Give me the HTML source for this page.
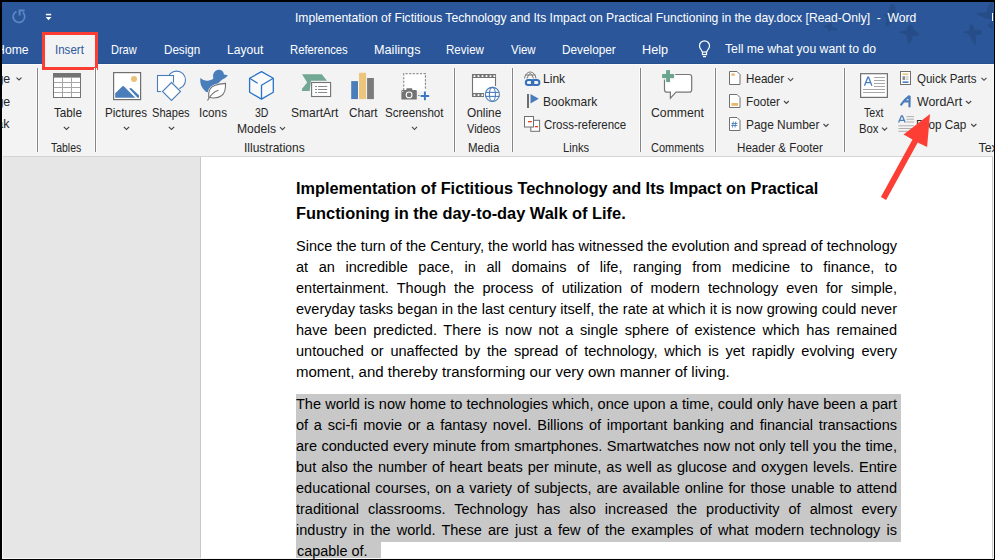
<!DOCTYPE html>
<html><head><meta charset="utf-8">
<style>
*{margin:0;padding:0;box-sizing:border-box}
html,body{width:995px;height:560px;overflow:hidden;background:#000}
body{position:relative;font-family:"Liberation Sans",sans-serif}
#blue{position:absolute;left:2px;top:2px;width:992px;height:62px;background:#2b579a;overflow:hidden}
#ribbon{position:absolute;left:2px;top:64px;width:992px;height:92px;background:#f3f3f3}
#rbline{position:absolute;left:2px;top:156px;width:992px;height:1px;background:#d4d4d4}
#doc{position:absolute;left:2px;top:157px;width:992px;height:402px;background:#e6e6e6}
#page{position:absolute;left:200px;top:157px;width:793px;height:402px;background:#fff;border-left:1px solid #c9c9c9;border-right:1px solid #c9c9c9}
#insbox{position:absolute;left:42px;top:32px;width:56px;height:38px;border:3px solid #fc3d33;background:#f3f3f3}
.sep{position:absolute;top:68px;width:1px;height:84px;background:#858585;box-shadow:-1px 0 0 #fcfcfc,1px 0 0 #fcfcfc}
.tx{position:absolute;white-space:pre;line-height:1;transform-origin:0 0}
.dl{position:absolute;left:295.6px;width:570.75px;font-size:13.8px;line-height:1;color:#000;white-space:nowrap;transform:scaleX(1.053);transform-origin:0 0}
.dl.j{white-space:normal;text-align:justify;text-align-last:justify}
.hl{position:absolute;background:#c8c8c8}
.chev{position:absolute;width:6px;height:4px}
svg{position:absolute;overflow:visible}
</style></head><body>
<div id="blue"></div>
<svg width="995" height="560" viewBox="0 0 995 560" style="left:0;top:0">
<g fill="#264d88">
 <path d="M821.9,26 Q826,25 828,24.5 Q829,22.3 831,22.6 Q832.5,24 832,27 L837.8,28.8 Q837.5,30.5 835,30.5 L831.5,30 Q830,31.8 829,31.4 Q827,29.5 826.5,27.8 Z"/>
 <path d="M892.3,3.7 Q896,5 895.5,12 Q894.5,20 889,25 Q886.5,27 885.4,26.4 Q885,22 887,18 L883.3,15.5 Q885,14 888,14.5 Q889,6 892.3,3.7 Z"/>
 <path d="M910.3,24.7 Q913,25 913.5,29 L918.8,33.2 Q919,36 916,36 L913,35.5 Q912,41 909,44.8 Q906.5,40 906.5,35 L898.7,32.2 Q902,30.5 907,30 Q907.5,25.5 910.3,24.7 Z"/>
 <path d="M970.7,24.3 Q974,24.5 974.5,29.5 L981.8,30.8 Q982.2,34.5 979,34.8 L975.5,35 Q977,41 975,45.3 Q971,40 969.5,34.5 L963,32.3 Q966,31 969.5,30 Q969,25 970.7,24.3 Z"/>
 <path d="M975.8,13.5 Q982,12 987,12.5 Q986,6 992,2 L993,2 L993,30 Q990,27 987,26 Q991,23 993,20 Q985,19 975.8,13.5 Z"/>
</g>
<rect x="992" y="13" width="1" height="8" fill="#fff"/>
</svg>

<div id="ribbon"></div>
<div id="rbline"></div>
<div id="doc"></div>
<div id="page"></div>
<div class="hl" style="left:296px;top:394px;width:605px;height:148px"></div>
<div class="hl" style="left:296px;top:541.7px;width:85px;height:17px"></div>
<div style="position:absolute;left:2px;top:63px;width:992px;height:1px;background:#24528f"></div>
<div style="position:absolute;left:2px;top:64px;width:992px;height:1px;background:#fbfbfb"></div>
<div style="position:absolute;left:2px;top:64px;width:1px;height:495px;background:#f7f7f7"></div>
<div style="position:absolute;left:993px;top:64px;width:1px;height:495px;background:#f7f7f7"></div>
<div style="position:absolute;left:2px;top:558px;width:992px;height:1px;background:#f7f7f7"></div>
<div id="insbox"></div>
<div class="sep" style="left:37px"></div>
<div class="sep" style="left:95px"></div>
<div class="sep" style="left:454px"></div>
<div class="sep" style="left:512px"></div>
<div class="sep" style="left:640px"></div>
<div class="sep" style="left:715px"></div>
<div class="sep" style="left:844px"></div>
<div class="tx" style="left:294.82px;top:12.10px;font-size:12.4px;font-weight:400;color:#fff;transform:scaleX(0.9762)">Implementation of Fictitious Technology and Its Impact on Practical Functioning in the day.docx [Read-Only]  -  Word</div>
<div class="tx" style="left:-3.90px;top:44.17px;font-size:12.2px;font-weight:400;color:#fff;transform:scaleX(1.0000)">Home</div>
<div class="tx" style="left:54.65px;top:44.17px;font-size:12.2px;font-weight:400;color:#2b579a;transform:scaleX(0.9467)">Insert</div>
<div class="tx" style="left:111.00px;top:44.17px;font-size:12.2px;font-weight:400;color:#fff;transform:scaleX(0.9036)">Draw</div>
<div class="tx" style="left:164.15px;top:44.17px;font-size:12.2px;font-weight:400;color:#fff;transform:scaleX(0.9541)">Design</div>
<div class="tx" style="left:227.31px;top:44.17px;font-size:12.2px;font-weight:400;color:#fff;transform:scaleX(0.9917)">Layout</div>
<div class="tx" style="left:290.27px;top:44.17px;font-size:12.2px;font-weight:400;color:#fff;transform:scaleX(0.9262)">References</div>
<div class="tx" style="left:374.16px;top:44.17px;font-size:12.2px;font-weight:400;color:#fff;transform:scaleX(1.0395)">Mailings</div>
<div class="tx" style="left:446.15px;top:44.17px;font-size:12.2px;font-weight:400;color:#fff;transform:scaleX(0.9487)">Review</div>
<div class="tx" style="left:510.90px;top:44.17px;font-size:12.2px;font-weight:400;color:#fff;transform:scaleX(0.9407)">View</div>
<div class="tx" style="left:562.13px;top:44.17px;font-size:12.2px;font-weight:400;color:#fff;transform:scaleX(0.9673)">Developer</div>
<div class="tx" style="left:642.06px;top:44.17px;font-size:12.2px;font-weight:400;color:#fff;transform:scaleX(1.0417)">Help</div>
<div class="tx" style="left:724.50px;top:43.27px;font-size:12.2px;font-weight:400;color:#fff;transform:scaleX(1.0047)">Tell me what you want to do</div>
<div class="tx" style="left:-18.70px;top:72.50px;font-size:12.4px;font-weight:400;color:#262626;transform:scaleX(1.0000)">Page</div>
<div class="tx" style="left:-18.70px;top:96.10px;font-size:12.4px;font-weight:400;color:#262626;transform:scaleX(1.0000)">Page</div>
<div class="tx" style="left:-23.00px;top:118.40px;font-size:12.4px;font-weight:400;color:#262626;transform:scaleX(1.0000)">Break</div>
<div class="tx" style="left:53.70px;top:106.70px;font-size:12.4px;font-weight:400;color:#262626;transform:scaleX(0.9448)">Table</div>
<div class="tx" style="left:51.10px;top:141.80px;font-size:12.4px;font-weight:400;color:#262626;transform:scaleX(0.8444)">Tables</div>
<div class="tx" style="left:105.46px;top:106.90px;font-size:12.4px;font-weight:400;color:#262626;transform:scaleX(0.9386)">Pictures</div>
<div class="tx" style="left:152.20px;top:106.90px;font-size:12.4px;font-weight:400;color:#262626;transform:scaleX(0.8951)">Shapes</div>
<div class="tx" style="left:199.46px;top:106.70px;font-size:12.4px;font-weight:400;color:#262626;transform:scaleX(0.9448)">Icons</div>
<div class="tx" style="left:255.00px;top:106.70px;font-size:12.4px;font-weight:400;color:#262626;transform:scaleX(0.8500)">3D</div>
<div class="tx" style="left:236.52px;top:122.70px;font-size:12.4px;font-weight:400;color:#262626;transform:scaleX(0.9769)">Models</div>
<div class="tx" style="left:291.23px;top:106.80px;font-size:12.4px;font-weight:400;color:#262626;transform:scaleX(0.9708)">SmartArt</div>
<div class="tx" style="left:348.60px;top:106.80px;font-size:12.4px;font-weight:400;color:#262626;transform:scaleX(0.9433)">Chart</div>
<div class="tx" style="left:385.17px;top:106.80px;font-size:12.4px;font-weight:400;color:#262626;transform:scaleX(0.9323)">Screenshot</div>
<div class="tx" style="left:244.43px;top:142.00px;font-size:12.4px;font-weight:400;color:#262626;transform:scaleX(0.9677)">Illustrations</div>
<div class="tx" style="left:466.80px;top:107.00px;font-size:12.4px;font-weight:400;color:#262626;transform:scaleX(0.9556)">Online</div>
<div class="tx" style="left:466.80px;top:122.80px;font-size:12.4px;font-weight:400;color:#262626;transform:scaleX(0.8895)">Videos</div>
<div class="tx" style="left:467.77px;top:141.90px;font-size:12.4px;font-weight:400;color:#262626;transform:scaleX(0.9273)">Media</div>
<div class="tx" style="left:542.63px;top:73.20px;font-size:12.4px;font-weight:400;color:#262626;transform:scaleX(0.9727)">Link</div>
<div class="tx" style="left:542.63px;top:95.70px;font-size:12.4px;font-weight:400;color:#262626;transform:scaleX(0.9709)">Bookmark</div>
<div class="tx" style="left:543.60px;top:119.00px;font-size:12.4px;font-weight:400;color:#262626;transform:scaleX(0.9258)">Cross-reference</div>
<div class="tx" style="left:563.30px;top:141.90px;font-size:12.4px;font-weight:400;color:#262626;transform:scaleX(0.9000)">Links</div>
<div class="tx" style="left:651.40px;top:107.20px;font-size:12.4px;font-weight:400;color:#262626;transform:scaleX(0.9870)">Comment</div>
<div class="tx" style="left:651.40px;top:141.60px;font-size:12.4px;font-weight:400;color:#262626;transform:scaleX(0.8850)">Comments</div>
<div class="tx" style="left:745.56px;top:72.90px;font-size:12.4px;font-weight:400;color:#262626;transform:scaleX(0.9400)">Header</div>
<div class="tx" style="left:745.55px;top:95.70px;font-size:12.4px;font-weight:400;color:#262626;transform:scaleX(0.9486)">Footer</div>
<div class="tx" style="left:745.54px;top:118.70px;font-size:12.4px;font-weight:400;color:#262626;transform:scaleX(0.9605)">Page Number</div>
<div class="tx" style="left:736.76px;top:141.60px;font-size:12.4px;font-weight:400;color:#262626;transform:scaleX(0.9374)">Header &amp; Footer</div>
<div class="tx" style="left:864.00px;top:106.90px;font-size:12.4px;font-weight:400;color:#262626;transform:scaleX(0.8565)">Text</div>
<div class="tx" style="left:858.79px;top:122.70px;font-size:12.4px;font-weight:400;color:#262626;transform:scaleX(0.9150)">Box</div>
<div class="tx" style="left:917.20px;top:72.60px;font-size:12.4px;font-weight:400;color:#262626;transform:scaleX(0.9297)">Quick Parts</div>
<div class="tx" style="left:917.20px;top:95.80px;font-size:12.4px;font-weight:400;color:#262626;transform:scaleX(0.9978)">WordArt</div>
<div class="tx" style="left:916.25px;top:118.90px;font-size:12.4px;font-weight:400;color:#262626;transform:scaleX(0.9481)">Drop Cap</div>
<div class="tx" style="left:978.50px;top:141.60px;font-size:12.4px;font-weight:400;color:#262626;transform:scaleX(1.0000)">Text</div>
<div class="tx" style="left:295.88px;top:180.96px;font-size:16px;font-weight:700;color:#000;transform:scaleX(1.0172)">Implementation of Fictitious Technology and Its Impact on Practical</div>
<div class="tx" style="left:295.88px;top:205.66px;font-size:16px;font-weight:700;color:#000;transform:scaleX(1.0238)">Functioning in the day-to-day Walk of Life.</div>
<div class="tx" style="left:295.51px;top:365.88px;font-size:13.8px;font-weight:400;color:#000;transform:scaleX(1.0877)">moment, and thereby transforming our very own manner of living.</div>
<div class="tx" style="left:296.60px;top:544.82px;font-size:13.8px;font-weight:400;color:#000;transform:scaleX(1.0448)">capable of.</div>
<div class="dl j" style="top:239.52px">Since the turn of the Century, the world has witnessed the evolution and spread of technology</div>
<div class="dl j" style="top:260.58px">at an incredible pace, in all domains of life, ranging from medicine to finance, to</div>
<div class="dl j" style="top:281.64px">entertainment. Though the process of utilization of modern technology even for simple,</div>
<div class="dl j" style="top:302.70px">everyday tasks began in the last century itself, the rate at which it is now growing could never</div>
<div class="dl j" style="top:323.76px">have been predicted. There is now not a single sphere of existence which has remained</div>
<div class="dl j" style="top:344.82px">untouched or unaffected by the spread of technology, which is yet rapidly evolving every</div>
<div class="dl j" style="top:397.82px">The world is now home to technologies which, once upon a time, could only have been a part</div>
<div class="dl j" style="top:418.82px">of a sci-fi movie or a fantasy novel. Billions of important banking and financial transactions</div>
<div class="dl j" style="top:439.82px">are conducted every minute from smartphones. Smartwatches now not only tell you the time,</div>
<div class="dl j" style="top:460.82px">but also the number of heart beats per minute, as well as glucose and oxygen levels. Entire</div>
<div class="dl j" style="top:481.82px">educational courses, on a variety of subjects, are available online for those unable to attend</div>
<div class="dl j" style="top:502.82px">traditional classrooms. Technology has also increased the productivity of almost every</div>
<div class="dl j" style="top:523.82px">industry in the world. These are just a few of the examples of what modern technology is</div>
<svg width="995" height="560" viewBox="0 0 995 560" style="left:0;top:0">
<!-- undo -->
<path d="M16.4,11.4 A5.8,5.8 0 1 0 22.9,12.4" fill="none" stroke="#5b87c3" stroke-width="1.7"/>
<path d="M19.6,15.6 L19.6,10.5 L24.6,10.5" fill="none" stroke="#5b87c3" stroke-width="1.9"/>
<!-- QAT -->
<rect x="45.9" y="13.8" width="5.3" height="1.5" fill="#fff"/>
<path d="M45.6,16.9 L51.5,16.9 L48.55,20.3 Z" fill="#fff"/>
<!-- lightbulb -->
<g fill="none" stroke="#fff" stroke-width="1.2">
 <path d="M702.4,52 L700.9,49.3 A5,5 0 1 1 708.1,49.3 L706.6,52"/>
 <rect x="702.5" y="52" width="4" height="2.6"/>
</g>
<rect x="703" y="56" width="3" height="1.2" fill="#fff"/>
<!-- table -->
<rect x="53.5" y="73.5" width="27" height="24" fill="#fff" stroke="#737373" stroke-width="1"/>
<rect x="53" y="73" width="28" height="4.6" fill="#737373"/>
<g stroke="#a6a6a6" stroke-width="1">
 <line x1="62.5" y1="77.6" x2="62.5" y2="97"/><line x1="71.5" y1="77.6" x2="71.5" y2="97"/>
 <line x1="54" y1="82.5" x2="80" y2="82.5"/><line x1="54" y1="87.5" x2="80" y2="87.5"/><line x1="54" y1="92.5" x2="80" y2="92.5"/>
</g>
<!-- pictures -->
<rect x="113.6" y="72.6" width="27" height="27" fill="#fff" stroke="#6f6f6f" stroke-width="1.2"/>
<circle cx="134" cy="79" r="3" fill="#e9c17a"/>
<path d="M115.2,97.8 L115.2,93.3 L122.5,86.2 Q123.1,85.7 123.8,86.2 L135.3,97.8 Z" fill="#4a7ebb"/>
<path d="M129.2,88.8 Q130.5,87.3 131.7,88.4 L139,95.2 L139,97.8 L137.6,97.8 Z" fill="#4a7ebb"/>
<!-- shapes -->
<circle cx="176.6" cy="80" r="8.9" fill="#fff" stroke="#4a7ebb" stroke-width="1.1"/>
<rect x="157.5" y="75.5" width="16" height="16" fill="#fff" stroke="#4a7ebb" stroke-width="1.1"/>
<path d="M171.5,82.5 L180.5,91.5 L171.5,100.5 L162.5,91.5 Z" fill="#fff" stroke="#f3f3f3" stroke-width="2.6"/>
<path d="M171.5,82.5 L180.5,91.5 L171.5,100.5 L162.5,91.5 Z" fill="#fff" stroke="#4a7ebb" stroke-width="1.1"/>
<!-- icons (bird+leaf) -->
<path d="M200.3,78 Q204,81.5 209,80.4 Q213,79.6 213.4,78.5 Q212,74 215.4,71 Q219,68.6 222.4,71 Q223.6,72.3 224,74.6 L228,75.2 Q226,77.8 222.8,79.2 Q221,80.5 219.5,82 L210,91.5 Q207.5,93 205.5,91.5 Q201,87.5 200.3,82 Z" fill="#4a7ebb"/>
<path d="M208.7,97.3 Q207.8,88.2 214.6,85.6 Q219.2,84 225.5,83.4 Q226,92 221.8,95.5 Q216.8,99.2 208.7,97.3 Z" fill="#fff" stroke="#f3f3f3" stroke-width="2.4"/>
<path d="M208.7,97.3 Q207.8,88.2 214.6,85.6 Q219.2,84 225.5,83.4 Q226,92 221.8,95.5 Q216.8,99.2 208.7,97.3 Z" fill="#fff" stroke="#737373" stroke-width="1.1"/>
<path d="M207.5,100.5 Q212,92 218.5,90.2" fill="none" stroke="#737373" stroke-width="1.1"/>
<!-- 3D cube -->
<g fill="none" stroke="#2a74c7" stroke-width="1.3" stroke-linejoin="round">
 <path d="M261.5,71.6 L273.3,78.3 L273.3,92.2 L261.5,99.1 L249.6,92.2 L249.6,78.3 Z" fill="#fafafa"/>
 <path d="M273.3,78.3 L261.5,85.2 L261.5,99.1"/>
 <path d="M249.6,78.3 L257.6,83.2"/>
</g>
<!-- smartart -->
<path d="M302,74.2 L321.8,74.2 L327,80.8 L311,80.8 L309.6,91 L302,91 L302,88.8 L307.2,82.4 Z" fill="#72a894"/>
<rect x="311.6" y="82.5" width="19" height="14" fill="#fff" stroke="#737373" stroke-width="1.1"/>
<g stroke="#8a8a8a" stroke-width="1">
 <line x1="315" y1="86.5" x2="317" y2="86.5"/><line x1="318" y1="86.5" x2="327.2" y2="86.5"/>
 <line x1="315" y1="89.5" x2="317" y2="89.5"/><line x1="318" y1="89.5" x2="327.2" y2="89.5"/>
 <line x1="315" y1="92.5" x2="317" y2="92.5"/><line x1="318" y1="92.5" x2="327.2" y2="92.5"/>
</g>
<!-- chart -->
<rect x="351.2" y="81.1" width="6.8" height="18" fill="#4a7ebb"/>
<rect x="359" y="72.8" width="7.1" height="26.3" fill="#ebc67c"/>
<rect x="367.1" y="78" width="6.8" height="21.1" fill="#7b7b7b"/>
<!-- screenshot -->
<path d="M403.8,90 L403.8,73.8 L425.4,73.8 L425.4,90" fill="none" stroke="#8c8c8c" stroke-width="1.1" stroke-dasharray="2,1.6"/>
<rect x="403.5" y="73.8" width="21.6" height="17" fill="#fff"/>
<path d="M403.8,90 L403.8,73.8 L425.4,73.8 L425.4,90" fill="none" stroke="#8c8c8c" stroke-width="1.1" stroke-dasharray="2,1.6"/>
<path d="M401.4,91 Q401.4,90 402.4,90 L406.2,90 L406.6,88.2 L412,88.2 L412.4,90 L415.8,90 Q416.8,90 416.8,91 L416.8,99.6 L401.4,99.6 Z" fill="#737373"/>
<circle cx="409.1" cy="94.9" r="2.9" fill="none" stroke="#fff" stroke-width="1.1"/>
<rect x="402.3" y="91" width="1" height="1" fill="#fff"/>
<line x1="418" y1="95.5" x2="419.6" y2="95.5" stroke="#8c8c8c" stroke-width="1"/>
<path d="M420.1,95.9 h9.6 M424.9,91.1 v9.6" stroke="#fbfbfb" stroke-width="3.6"/><path d="M420.6,95.9 h8.6 M424.9,91.6 v8.6" stroke="#3d77c0" stroke-width="2"/>
<!-- online videos -->
<rect x="472.5" y="74.5" width="23" height="22" fill="#fff"/>
<path d="M472.5,97 L472.5,74.5 L495.5,74.5 L495.5,86" fill="none" stroke="#737373" stroke-width="1.1"/>
<rect x="472" y="74" width="24" height="4" fill="#737373"/>
<rect x="472" y="93" width="12" height="4" fill="#737373"/>
<g fill="#fff">
 <rect x="473.6" y="75.2" width="1.8" height="1.8"/><rect x="477.6" y="75.2" width="1.8" height="1.8"/><rect x="481.6" y="75.2" width="1.8" height="1.8"/><rect x="485.6" y="75.2" width="1.8" height="1.8"/><rect x="489.6" y="75.2" width="1.8" height="1.8"/><rect x="493.4" y="75.2" width="1.8" height="1.8"/>
 <rect x="473.6" y="94.2" width="1.8" height="1.8"/><rect x="477.6" y="94.2" width="1.8" height="1.8"/><rect x="481.4" y="94.2" width="1.8" height="1.8"/>
</g>
<circle cx="492.4" cy="94.4" r="8.4" fill="#f3f3f3"/>
<g fill="none" stroke="#4a7ebb" stroke-width="1.1">
 <circle cx="492.4" cy="94.4" r="7" fill="#fff"/>
 <ellipse cx="492.4" cy="94.4" rx="3" ry="7"/>
 <line x1="485.4" y1="92.4" x2="499.4" y2="92.4"/><line x1="485.4" y1="96.4" x2="499.4" y2="96.4"/>
</g>
<!-- link -->
<path d="M524.5,78.5 A5.8,7.5 0 0 1 536,78.5" fill="none" stroke="#7a7a7a" stroke-width="1"/>
<path d="M527,78.5 Q530.2,68.5 533.5,78.5 M525,75 L535.5,75" fill="none" stroke="#7a7a7a" stroke-width="1"/>
<g fill="none" stroke="#3570b8" stroke-width="2">
 <rect x="525.8" y="80" width="7.6" height="5" rx="2.5"/>
 <rect x="531.8" y="80" width="7.6" height="5" rx="2.5"/>
</g>
<!-- bookmark -->
<rect x="527" y="94" width="2" height="14" fill="#6d6d6d"/>
<path d="M530.5,94 L538.8,98.8 L530.5,103.5 Z" fill="#4a7ebb"/>
<!-- cross ref -->
<rect x="530.8" y="120.3" width="8.8" height="11" fill="#fff" stroke="#6f6f6f" stroke-width="1"/>
<rect x="524.5" y="116.5" width="9" height="10.5" fill="#fff" stroke="#6f6f6f" stroke-width="1"/>
<rect x="528" y="121" width="3.8" height="1.3" fill="#e0401c"/>
<rect x="534.9" y="126" width="3.1" height="1.3" fill="#e0401c"/>
<!-- comment -->
<path d="M667,74.5 L689.2,74.5 Q691.7,74.5 691.7,77 L691.7,89.7 Q691.7,92.2 689.2,92.2 L676,92.2 L670.4,98.2 L670.4,92.2 L667,92.2 Q664.5,92.2 664.5,89.7 L664.5,77 Q664.5,74.5 667,74.5 Z" fill="#fff" stroke="#777" stroke-width="1.2"/>
<rect x="661" y="72.8" width="14.2" height="6.8" fill="#f3f3f3"/>
<rect x="665" y="69" width="6.2" height="14.2" fill="#f3f3f3"/>
<rect x="662.1" y="74" width="11.9" height="4.1" fill="#6aa58f"/>
<rect x="666.1" y="70.1" width="3.9" height="11.9" fill="#6aa58f"/>
<!-- header/footer/page number -->
<g fill="#fff" stroke="#707070" stroke-width="1">
 <path d="M729.5,71.5 L737,71.5 L740,74.5 L740,84.5 L729.5,84.5 Z"/>
 <path d="M729.5,94.5 L737,94.5 L740,97.5 L740,107.5 L729.5,107.5 Z"/>
 <path d="M729.5,117.5 L737,117.5 L740,120.5 L740,130.5 L729.5,130.5 Z"/>
</g>
<rect x="731.4" y="73.5" width="3.4" height="2.3" fill="#e8b96c"/>
<rect x="731.4" y="103" width="6.6" height="2.8" fill="#e8b96c"/>
<g stroke="#4a7ebb" stroke-width="0.9" fill="none">
 <path d="M733.3,121.5 L732.5,127.5 M735.8,121.5 L735,127.5 M731.5,123.5 L737.5,123.5 M731.3,125.5 L737.3,125.5"/>
</g>
<!-- text box -->
<rect x="860.6" y="73.7" width="26.8" height="23.7" fill="#fff" stroke="#6f6f6f" stroke-width="1.2"/>
<path d="M864.5,85.8 L867.8,77.2 L868.6,77.2 L871.9,85.8 M865.8,82.6 L870.6,82.6" fill="none" stroke="#4a7ebb" stroke-width="1.3"/>
<g stroke="#a8a8a8" stroke-width="1">
 <line x1="874" y1="77.5" x2="885" y2="77.5"/><line x1="874" y1="80.5" x2="885" y2="80.5"/><line x1="874" y1="83.5" x2="885" y2="83.5"/><line x1="874" y1="86.5" x2="885" y2="86.5"/>
 <line x1="863" y1="89.5" x2="885" y2="89.5"/><line x1="863" y1="92.5" x2="885" y2="92.5"/>
</g>
<!-- quick parts -->
<rect x="900.5" y="71.5" width="10" height="13" fill="#fff" stroke="#6f6f6f" stroke-width="1"/>
<rect x="902.5" y="73.5" width="6" height="1.3" fill="#e8b96c"/>
<rect x="902.5" y="76.3" width="2.6" height="3.6" fill="#8a8a8a"/>
<rect x="905.8" y="76.5" width="2.7" height="0.9" fill="#a0a0a0"/><rect x="905.8" y="78.6" width="2.7" height="0.9" fill="#a0a0a0"/>
<rect x="902.5" y="81.4" width="6" height="1.5" fill="#3f78c0"/>
<!-- wordart -->
<path d="M901.2,104.6 Q904.6,99.4 908.9,96.4 L909.6,96.6 L909.5,106.4 M903.6,101.4 L909.2,101.4" fill="none" stroke="#4a7ebb" stroke-width="2.2" stroke-linecap="round" stroke-linejoin="round"/>
<!-- drop cap -->
<path d="M898.6,122.4 L901.4,116 L902.4,116 L905.2,122.4 M899.7,120.4 L904.2,120.4" fill="none" stroke="#4a7ebb" stroke-width="1.3"/>
<g stroke="#a8a8a8" stroke-width="0.9">
 <line x1="906.5" y1="116.6" x2="914" y2="116.6"/><line x1="906.5" y1="119.2" x2="914" y2="119.2"/><line x1="906.5" y1="122" x2="914" y2="122"/>
 <line x1="898.4" y1="125.8" x2="914" y2="125.8"/><line x1="898.4" y1="128.5" x2="914" y2="128.5"/><line x1="898.4" y1="131.3" x2="914" y2="131.3"/>
</g>
<!-- chevrons -->
<g fill="none" stroke="#444" stroke-width="1.1">
 <path d="M16.5,77.6 L19,80 L21.5,77.6"/>
 <path d="M63.8,126.8 L66.5,129.5 L69.2,126.8"/>
 <path d="M123.8,126.8 L126.5,129.5 L129.2,126.8"/>
 <path d="M168.8,126.8 L171.5,129.5 L174.2,126.8"/>
 <path d="M280,127.2 L282.5,129.7 L285,127.2"/>
 <path d="M412,126.8 L414.5,129.5 L417,126.8"/>
 <path d="M788,78.2 L790.6,80.8 L793.2,78.2"/>
 <path d="M784,101 L786.4,103.4 L788.8,101"/>
 <path d="M823.5,124 L826,126.5 L828.5,124"/>
 <path d="M882,127.6 L884.6,130.2 L887.2,127.6"/>
 <path d="M981.5,77.8 L984,80.3 L986.5,77.8"/>
 <path d="M966,101 L968.6,103.5 L971.2,101"/>
 <path d="M971.2,124 L973.8,126.5 L976.4,124"/>
</g>
<!-- red arrow -->
<path d="M930,113.9 L927.1,147 L917.7,142.4 L886.1,200 L880.9,197.1 L912.5,139.6 L903.6,134.5 Z" fill="#fd3e34"/>
</svg>

<div style="position:absolute;left:0;top:0;width:995px;height:2px;background:#000"></div>
<div style="position:absolute;left:0;top:0;width:2px;height:560px;background:#000"></div>
<div style="position:absolute;left:994px;top:0;width:1px;height:560px;background:#000"></div>
<div style="position:absolute;left:0;top:559px;width:995px;height:1px;background:#000"></div>
</body></html>
